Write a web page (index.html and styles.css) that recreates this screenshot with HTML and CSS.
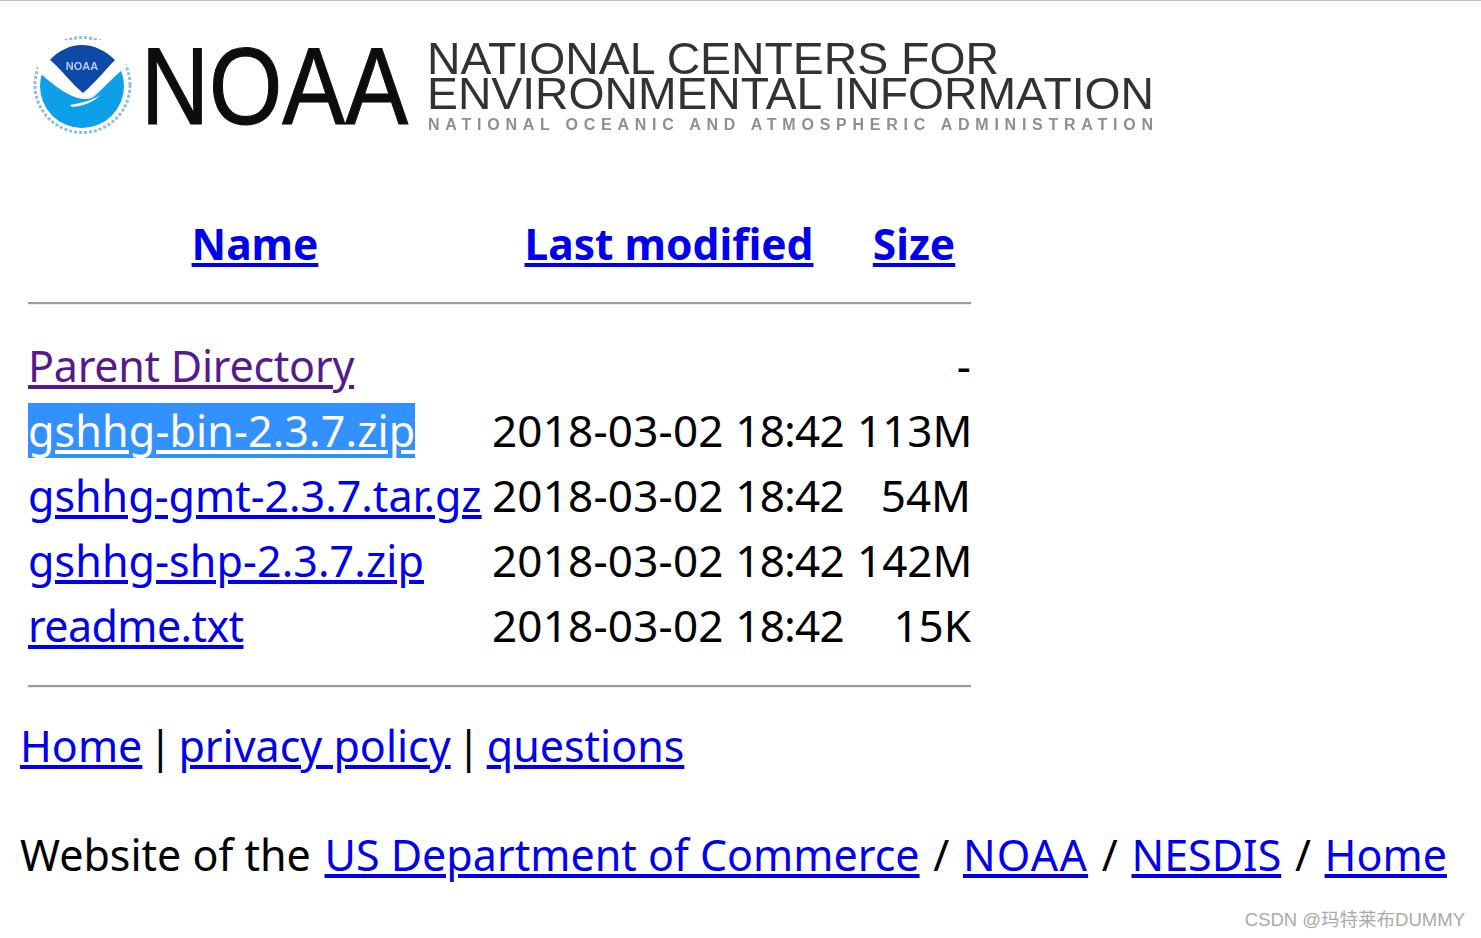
FILE: index.html
```html
<!DOCTYPE html>
<html lang="en">
<head>
<meta charset="utf-8">
<title>Index of gshhg</title>
<link rel="stylesheet" href="styles.css">
</head>
<body>
<header class="logo">
<svg class="logo-svg" width="1170" height="150" viewBox="0 1 1170 150" role="img" aria-label="NOAA National Centers for Environmental Information">
  <defs>
    <filter id="soft" x="-5%" y="-5%" width="110%" height="110%"><feGaussianBlur stdDeviation="0.7"/></filter>
    <filter id="softer" x="-5%" y="-5%" width="110%" height="110%"><feGaussianBlur stdDeviation="0.65"/></filter>
  </defs>
  <g filter="url(#soft)">
    <circle cx="82.5" cy="85" r="47.5" fill="none" stroke="#8fbde4" stroke-width="3" stroke-dasharray="3 2"/>
    <circle cx="82" cy="86" r="42" fill="#089fe8"/>
    <path d="M38 40 H126 V66 L121 71 C110 80 100 92 92 98 C85 100 78 99 70 95 C60 90 50 82 41 74 L38 70 Z" fill="#fff"/>
    <path d="M50 60 C58 51 70 45 82 45 C94 45 106 51 115 60 C107 68 96 82 83 93 C72 84 60 68 50 60 Z" fill="#0a48a8"/>
    <path d="M70 105 C80 103 92 101 100 95 C94 102 84 106 72 107 Z" fill="#fff"/>
    <text x="82" y="70" class="seal">NOAA</text>
  </g>
  <g filter="url(#softer)">
    <text x="141" y="124" class="noaa" textLength="267" lengthAdjust="spacingAndGlyphs">NOAA</text>
    <text x="427" y="73.5" class="ncei" textLength="572" lengthAdjust="spacingAndGlyphs">NATIONAL CENTERS FOR</text>
    <text x="427" y="109" class="ncei" textLength="727" lengthAdjust="spacingAndGlyphs">ENVIRONMENTAL INFORMATION</text>
    <text x="428" y="130" class="admin" textLength="725" lengthAdjust="spacing">NATIONAL OCEANIC AND ATMOSPHERIC ADMINISTRATION</text>
  </g>
</svg>
</header>
<main>
<table class="listing">
  <colgroup><col class="col-name"><col class="col-date"><col class="col-size"></colgroup>
  <thead>
    <tr class="head"><th><a href="#">Name</a></th><th><a href="#">Last modified</a></th><th><a href="#">Size</a></th></tr>
    <tr class="rule-top"><th colspan="3"><hr></th></tr>
  </thead>
  <tbody>
    <tr><td><a class="visited" href="#">Parent Directory</a></td><td></td><td class="size">-</td></tr>
    <tr><td><a class="selected" href="#">gshhg-bin-2.3.7.zip</a></td><td class="date">2018-03-02 <span class="time">18:42</span></td><td class="size">113M</td></tr>
    <tr><td><a href="#">gshhg-gmt-2.3.7.tar.gz</a></td><td class="date">2018-03-02 <span class="time">18:42</span></td><td class="size">54M</td></tr>
    <tr><td><a class="shp" href="#">gshhg-shp-2.3.7.zip</a></td><td class="date">2018-03-02 <span class="time">18:42</span></td><td class="size">142M</td></tr>
    <tr><td><a class="readme" href="#">readme.txt</a></td><td class="date">2018-03-02 <span class="time">18:42</span></td><td class="size">15K</td></tr>
    <tr class="rule-bottom"><td colspan="3"><hr></td></tr>
  </tbody>
</table>
<p class="links"><a href="#">Home</a> | <a href="#">privacy policy</a> | <a href="#">questions</a></p>
<p class="site"><span class="intro">Website of the</span> <a href="#">US Department of Commerce</a> / <a class="agency" href="#">NOAA</a> / <a href="#">NESDIS</a> / <a href="#">Home</a></p>
</main>
<div class="watermark">CSDN @玛特莱布DUMMY</div>
</body>
</html>
```
FILE: styles.css
```css
html, body { margin: 0; padding: 0; background: #fff; }
body {
  width: 1481px;
  height: 938px;
  overflow: hidden;
  position: relative;
  border-top: 1px solid #bdbdbd;
  box-sizing: border-box;
  font-family: "Noto Sans", "Noto Sans CJK SC", sans-serif;
  font-size: 43px;
  color: #000;
}
a { color: #0000ee; }
a.visited { color: #551a8b; letter-spacing: -0.25px; }
.logo { height: 205px; }
.logo-svg { display: block; }
.seal { font: bold 11px "Liberation Sans", sans-serif; fill: #b9cdee; text-anchor: middle; }
.noaa { font: 110px "Liberation Sans", sans-serif; fill: #0a0a0a; stroke: #0a0a0a; stroke-width: 1.2; }
.ncei { font: 44.5px "Liberation Sans", sans-serif; fill: #333; }
.admin { font: bold 16px "Liberation Sans", sans-serif; fill: #8f8f8f; }
.listing {
  margin-left: 21px;
  border-collapse: separate;
  border-spacing: 0;
  table-layout: fixed;
  width: 957px;
}
.col-name { width: 464px; }
.col-date { width: 365px; }
.col-size { width: 128px; }
.listing th, .listing td { padding: 0 7px; height: 65px; line-height: 55px; white-space: nowrap; }
.listing tr > :nth-child(1) { padding-right: 3px; }
.listing tr > :nth-child(2) { padding-right: 4px; }
.listing td.size { text-align: right; font-size: 44px; }
.listing td.date { font-size: 44px; letter-spacing: 0.2px; }
.time { letter-spacing: -0.8px; }
.listing .head th { height: 74px; font-weight: bold; font-size: 42.5px; }
.listing .rule-top th { height: 53px; padding: 22px 0 0 7px; box-sizing: border-box; vertical-align: top; }
.listing .rule-bottom td { height: 44px; padding: 27px 0 0 7px; box-sizing: border-box; vertical-align: top; }
hr { margin: 0; height: 0; border: 0; border-top: 2px solid #9a9a9a; border-bottom: 1px solid #eee; width: 943px; }
.selected { display: inline-block; letter-spacing: 0.15px; background: #3390ff; color: #fff; }
.shp { letter-spacing: 0.1px; }
.readme { letter-spacing: -0.6px; }
.links, .site { margin: 0 0 0 20px; line-height: 60px; white-space: nowrap; }
.links { margin-top: 14px; word-spacing: -5px; }
.links a { word-spacing: 0; }
.site { margin-top: 49px; word-spacing: 2.5px; }
.site a, .intro { word-spacing: 0; }
.agency { letter-spacing: 1.2px; }
.watermark {
  position: absolute;
  right: 16px;
  bottom: 7px;
  font-family: "Liberation Sans", "Noto Sans CJK SC", sans-serif;
  font-size: 18.5px;
  color: #aaa;
}
```
